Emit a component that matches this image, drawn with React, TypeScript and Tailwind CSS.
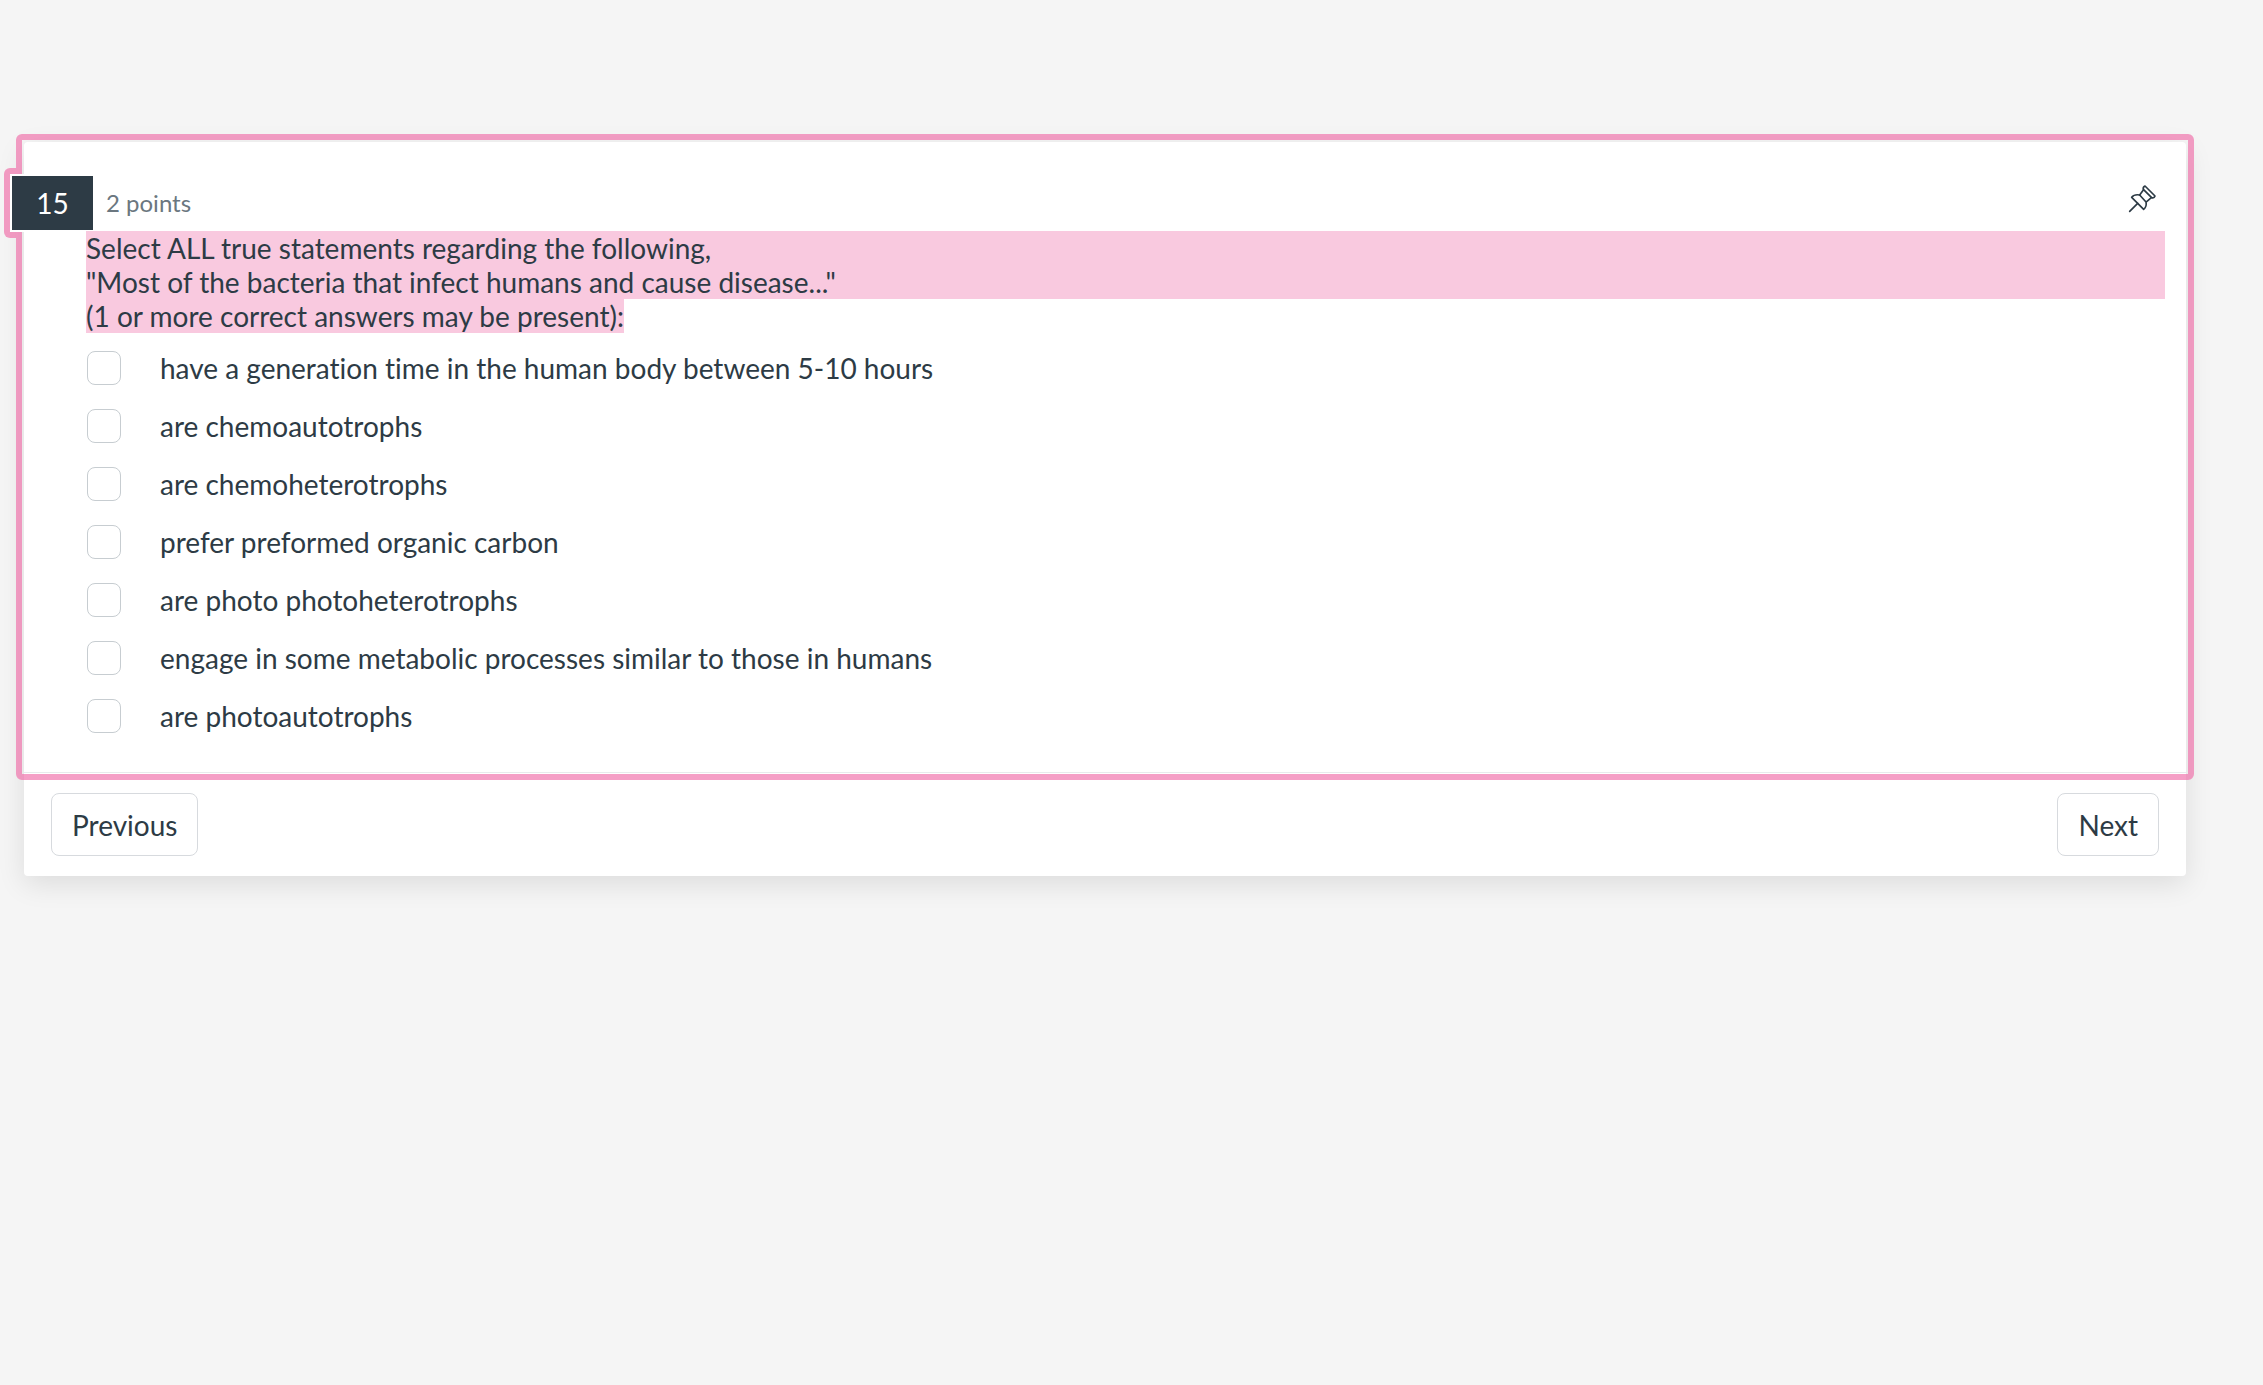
import { useState } from "react";

const options = [
  "have a generation time in the human body between 5-10 hours",
  "are chemoautotrophs",
  "are chemoheterotrophs",
  "prefer preformed organic carbon",
  "are photo photoheterotrophs",
  "engage in some metabolic processes similar to those in humans",
  "are photoautotrophs",
];

const buttonClass =
  "h-[63px] cursor-pointer rounded-lg border border-[#d7dade] bg-white px-5 text-[28px] leading-[34px] text-[#2d3b45]";

function PinIcon() {
  return (
    <svg
      viewBox="0 0 87 87"
      className="h-[29px] w-[29px]"
      fill="none"
      stroke="currentColor"
      strokeWidth="5"
      strokeLinecap="round"
      strokeLinejoin="round"
      aria-hidden="true"
    >
      <path d="M51 6 L81 36 Q79 43 71 41 L46 16 Q44 9 51 6 Z" />
      <path d="M46 18 L35 33 M70 41 L56 53" />
      <path d="M11 40 Q19 30 35 33 L54 54 Q57 68 47 76 Z" />
      <path d="M29 58 L5 82" />
    </svg>
  );
}

type OptionRowProps = {
  id: string;
  label: string;
  checked: boolean;
  onToggle: () => void;
};

function OptionRow({ id, label, checked, onToggle }: OptionRowProps) {
  return (
    <li className="flex items-center">
      <input
        id={id}
        type="checkbox"
        checked={checked}
        onChange={onToggle}
        className="h-[34px] w-[34px] shrink-0 appearance-none rounded-lg border border-[#c7cdd1] bg-white checked:bg-[#2d3b45]"
      />
      <label htmlFor={id} className="pl-[39px]">
        {label}
      </label>
    </li>
  );
}

export default function App() {
  const [selected, setSelected] = useState<string[]>([]);

  const toggle = (option: string) =>
    setSelected((prev) =>
      prev.includes(option)
        ? prev.filter((o) => o !== option)
        : [...prev, option],
    );

  return (
    <main className="min-h-screen bg-[#f5f5f5] pt-[142px] pr-[77px] pl-6 font-[Lato,sans-serif] text-[28px] leading-[34px] text-[#2d3b45] [font-variant-ligatures:none]">
      <div className="rounded bg-white shadow-[0_8px_28px_rgba(0,0,0,0.1)]">
        <section className="relative pt-[34px] pb-[39px]">
          {/* focus frame, with a tab that wraps round the question number */}
          <span className="pointer-events-none absolute -inset-2 rounded-md border-6 border-[#f06ba7]/65" />
          <span className="pointer-events-none absolute top-[26px] -left-5 h-[70px] w-3 rounded-l-md border-6 border-r-0 border-[#f06ba7]/65" />
          <header className="flex items-center pr-[29px]">
            <h2 className="relative -ml-3 flex h-[54px] w-[81px] items-center justify-center bg-[#2d3b45] text-white ring-2 ring-white">
              15
            </h2>
            <span className="pl-[13px] text-2xl text-[#6b7780]">2 points</span>
            <button
              type="button"
              aria-label="Pin question"
              className="mb-2.5 ml-auto cursor-pointer"
            >
              <PinIcon />
            </button>
          </header>
          <div className="relative mt-px pr-[21px] pl-[62px]">
            <p className="bg-[#f9c9df]">
              Select ALL true statements regarding the following,
              <br />
              "Most of the bacteria that infect humans and cause disease..."
            </p>
            <p className="w-fit bg-[#f9c9df]">
              (1 or more correct answers may be present):
            </p>
          </div>
          <ul className="flex flex-col gap-6 pt-[18px] pl-[63px]">
            {options.map((option, i) => (
              <OptionRow
                key={option}
                id={`option-${i}`}
                label={option}
                checked={selected.includes(option)}
                onToggle={() => toggle(option)}
              />
            ))}
          </ul>
        </section>
        <footer className="flex justify-between border-t border-[#e8eaec] px-[27px] py-5">
          <button type="button" className={buttonClass}>
            Previous
          </button>
          <button type="button" className={buttonClass}>
            Next
          </button>
        </footer>
      </div>
    </main>
  );
}
